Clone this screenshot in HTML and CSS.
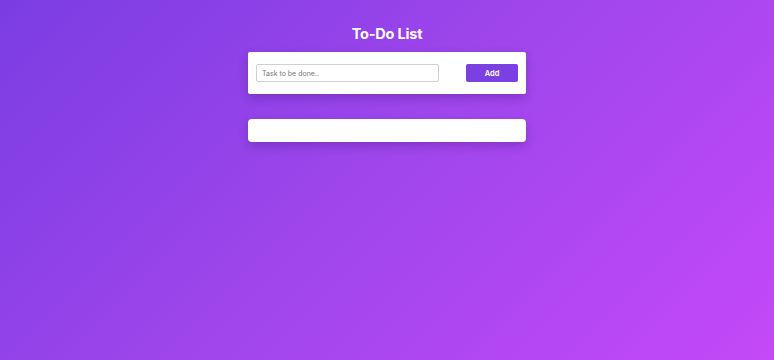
FILE: index.html
```html
<!DOCTYPE html>
<html>

<head>
	<meta charset="utf-8">
	<meta name="viewport" content="width=device-width, initial-scale=1">
	<title>To-Do List</title>
	<link rel="stylesheet" href="styles.css">
</head>

<body>
	<div class="container">
		<h1 class="title">To-Do List</h1>
		<form class="card todo-form" onsubmit="return false;">
			<input type="text" class="task-input" placeholder="Task to be done..">
			<button type="submit" class="add-btn">Add</button>
		</form>
		<ul class="card todo-list"></ul>
	</div>
</body>

</html>
```

FILE: styles.css
```css
* {
	margin: 0;
	padding: 0;
	box-sizing: border-box;
}

html,
body {
	height: 100%;
}

body {
	font-family: Inter, "Noto Sans", sans-serif;
	background: linear-gradient(135deg, #7a3de2 0%, #a046ec 50%, #c449f7 100%);
	min-height: 360px;
}

.container {
	width: 278px;
	margin: 0 auto;
	padding-top: 25px;
}

.title {
	color: #fff;
	font-size: 14.5px;
	font-weight: 700;
	text-align: center;
	letter-spacing: -0.2px;
	line-height: 18px;
	margin-bottom: 9px;
}

.card {
	background: #fff;
	box-shadow: 0 4px 10px rgba(60, 20, 120, 0.3);
}

.todo-form {
	display: flex;
	align-items: center;
	justify-content: space-between;
	padding: 12px 8px;
	border-radius: 2px;
}

.task-input {
	width: 183px;
	height: 18px;
	border: 1px solid #cfcfd4;
	border-radius: 2px;
	padding: 0 5px;
	font-family: inherit;
	font-size: 7px;
	color: #555;
	outline: 0;
}

.task-input::placeholder {
	color: #777;
}

.add-btn {
	width: 52px;
	height: 18px;
	border: 0;
	border-radius: 2px;
	background: #7b40e2;
	color: #fff;
	font-family: inherit;
	font-size: 7.5px;
	font-weight: 600;
	cursor: pointer;
}

.todo-list {
	list-style: none;
	margin-top: 25px;
	height: 23px;
	border-radius: 4px;
}
```
